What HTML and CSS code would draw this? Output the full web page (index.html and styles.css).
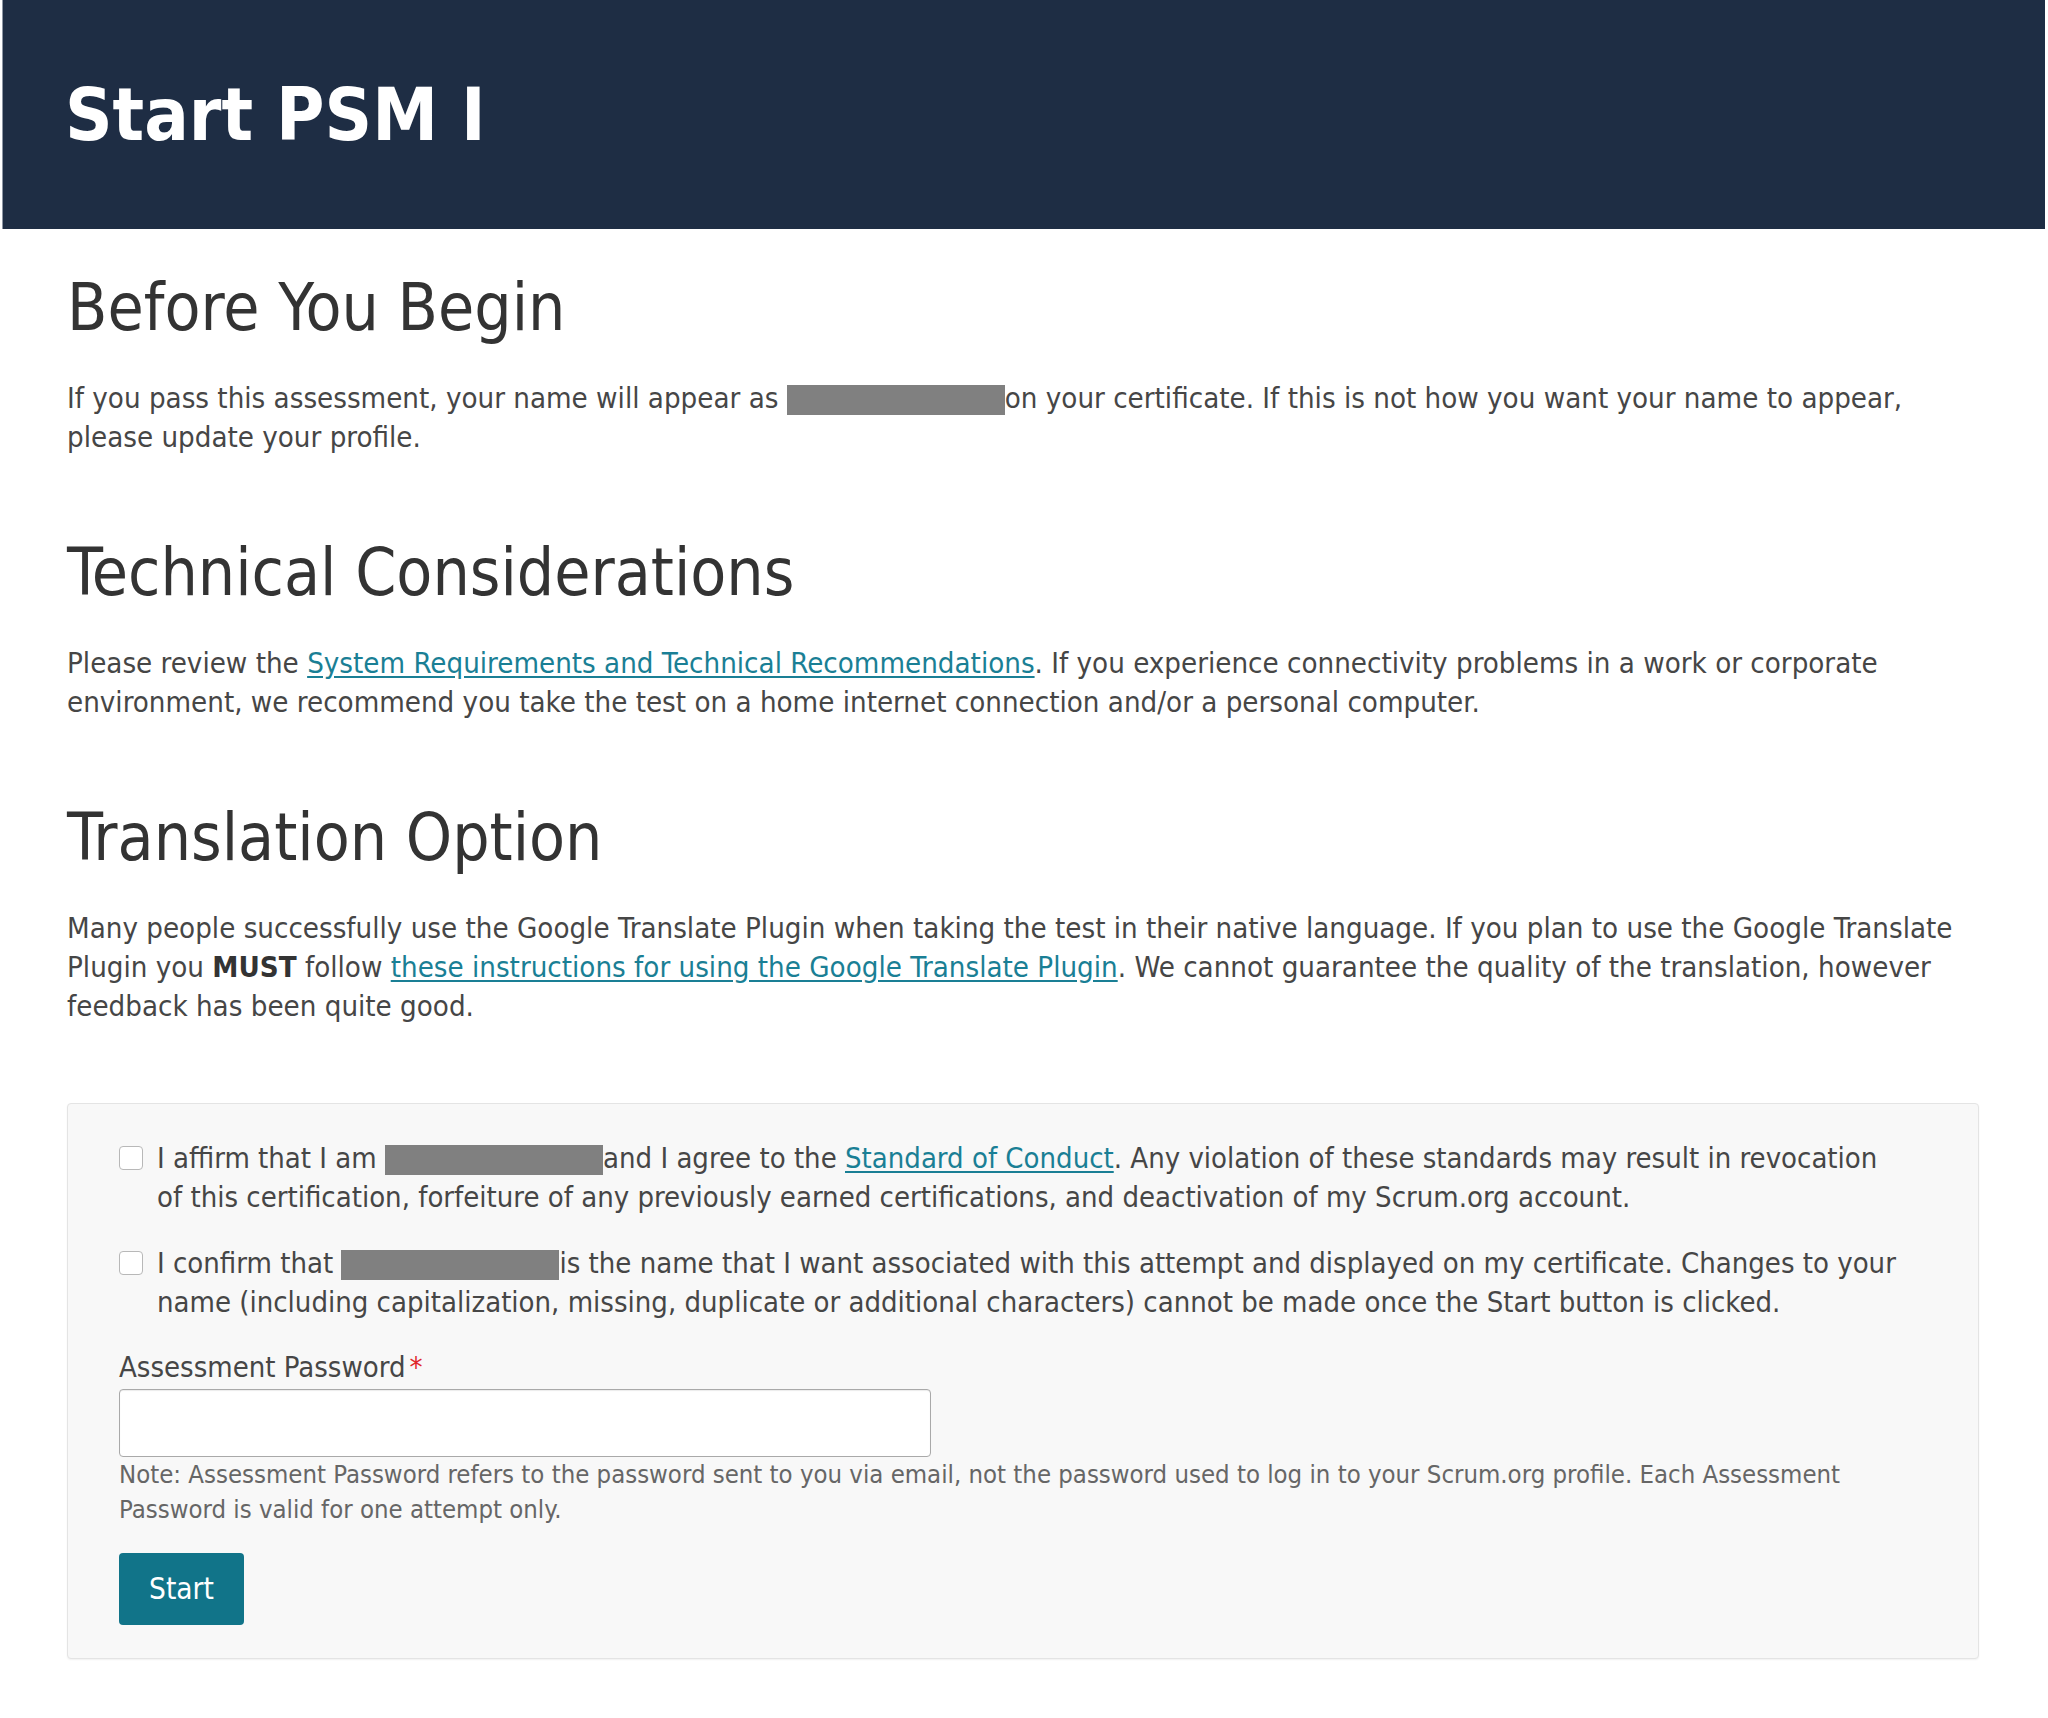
FILE: index.html
```html
<!DOCTYPE html>
<html lang="en">
<head>
<meta charset="utf-8">
<title>Start PSM I</title>
<link rel="stylesheet" href="styles.css">
</head>
<body>
<div class="page">
  <header class="banner">
    <h1 class="banner-title">Start PSM I</h1>
  </header>
  <main class="content">
    <h2 class="section-title first">Before You Begin</h2>
    <p class="text">If you pass this assessment, your name will appear as <span class="redact r-p"></span>on your certificate. If this is not how you want your name to appear, please update your profile.</p>

    <h2 class="section-title">Technical Considerations</h2>
    <p class="text">Please review the <a href="#" class="link">System Requirements and Technical Recommendations</a>. If you experience connectivity problems in a work or corporate environment, we recommend you take the test on a home internet connection and/or a personal computer.</p>

    <h2 class="section-title">Translation Option</h2>
    <p class="text">Many people successfully use the Google Translate Plugin when taking the test in their native language. If you plan to use the Google Translate Plugin you <strong>MUST</strong> follow <a href="#" class="link">these instructions for using the Google Translate Plugin</a>. We cannot guarantee the quality of the translation, however feedback has been quite good.</p>

    <form class="panel">
      <label class="check">
        <span class="box"></span>
        <span class="check-text">I affirm that I am <span class="redact r-c"></span>and I agree to the <a href="#" class="link">Standard of Conduct</a>. Any violation of these standards may result in revocation of this certification, forfeiture of any previously earned certifications, and deactivation of my Scrum.org account.</span>
      </label>
      <label class="check">
        <span class="box"></span>
        <span class="check-text">I confirm that <span class="redact r-c"></span>is the name that I want associated with this attempt and displayed on my certificate. Changes to your name (including capitalization, missing, duplicate or additional characters) cannot be made once the Start button is clicked.</span>
      </label>
      <div class="field">
        <div class="field-label">Assessment Password<span class="req">*</span></div>
        <div class="input"></div>
        <div class="note">Note: Assessment Password refers to the password sent to you via email, not the password used to log in to your Scrum.org profile. Each Assessment Password is valid for one attempt only.</div>
      </div>
      <div class="btn">Start</div>
    </form>
  </main>
</div>
</body>
</html>
```

FILE: styles.css
```css
html, body {
  margin: 0;
  padding: 0;
  background: #ffffff;
}
body {
  font-family: "DejaVu Sans Condensed", "DejaVu Sans", sans-serif;
  font-stretch: semi-condensed;
  color: #464646;
}
.page {
  padding: 0 3px 0 2px;
  min-height: 1718px;
  box-sizing: border-box;
}
.banner {
  background: #1e2d44;
  border-left: 1px solid #8d96a4;
  height: 229px;
  box-sizing: border-box;
  padding: 72px 0 0 62px;
}
.banner-title {
  margin: 0;
  font-size: 73.5px;
  line-height: 86px;
  font-weight: bold;
  color: #ffffff;
}
.content {
  width: 1912px;
  padding-left: 65px;
}
.section-title {
  margin: 77px 0 30px;
  font-size: 65.5px;
  line-height: 77px;
  font-weight: normal;
  color: #333333;
}
.section-title.first {
  margin-top: 40px;
}
.text {
  margin: 0;
  padding-top: 3px;
  font-size: 29.2px;
  line-height: 39px;
}
.text strong {
  color: #333;
}
.link {
  color: #1a7f95;
  text-decoration: underline;
  text-underline-offset: 3px;
}
.redact {
  display: inline-block;
  width: 218px;
  height: 30px;
  background: #808080;
  vertical-align: -7px;
}
.panel {
  margin-top: 77px;
  background: #f8f8f8;
  border: 1px solid #e4e4e4;
  border-radius: 4px;
  box-shadow: 0 1px 2px rgba(0,0,0,0.06);
  padding: 35px 76px 33px 51px;
  display: flex;
  flex-direction: column;
  align-items: flex-start;
}
.check {
  display: flex;
  gap: 14px;
  font-size: 29px;
  line-height: 39px;
  margin-bottom: 27px;
}
.box {
  flex: none;
  width: 22px;
  height: 22px;
  margin-top: 7px;
  background: #ffffff;
  border: 1px solid #b8b8b8;
  border-radius: 4px;
}
.field {
  align-self: stretch;
  margin-top: -1px;
}
.field-label {
  font-size: 29px;
  line-height: 39px;
}
.req {
  color: #e0262a;
  margin-left: 4px;
}
.input {
  margin-top: 2px;
  width: 810px;
  height: 66px;
  background: #ffffff;
  border: 1px solid #a9a9a9;
  border-radius: 4px;
  box-shadow: inset 0 1px 1px rgba(0,0,0,0.08);
}
.note {
  font-size: 25.5px;
  line-height: 35px;
  color: #666666;
}
.btn {
  margin-top: 26px;
  width: 125px;
  height: 72px;
  line-height: 72px;
  text-align: center;
  background: #117489;
  color: #ffffff;
  font-size: 29.5px;
  border-radius: 4px;
}
```
